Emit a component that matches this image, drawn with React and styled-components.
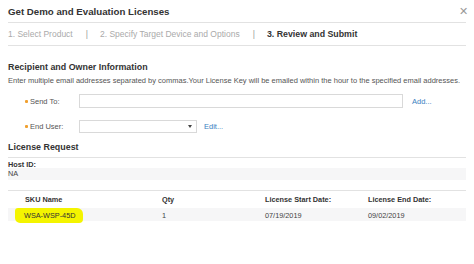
import React from "react";
import styled, { createGlobalStyle } from "styled-components";

const GlobalStyle = createGlobalStyle`
  body {
    margin: 0;
    background: #fff;
    font-family: "Liberation Sans", Arial, sans-serif;
    color: #333;
  }
`;

const Dialog = styled.div`
  width: 474px;
  height: 264px;
  padding: 0 8px;
  box-sizing: border-box;
  overflow: hidden;
`;

const Header = styled.div`
  height: 22px;
  display: flex;
  align-items: center;
  justify-content: space-between;
  border-bottom: 1px solid #e2e2e2;
`;

const Title = styled.h1`
  margin: 0;
  font-size: 9.7px;
  font-weight: bold;
  color: #333;
`;

const Close = styled.span`
  font-size: 11px;
  color: #999;
  line-height: 1;
  margin-right: -2px;
`;

const Steps = styled.div`
  height: 22px;
  display: flex;
  align-items: center;
  border-bottom: 1px solid #e2e2e2;
  font-size: 8.5px;
  color: #aaa;
`;

const Step = styled.span`
  color: ${(p) => (p.$active ? "#333" : "#aaa")};
  font-weight: ${(p) => (p.$active ? "bold" : "normal")};
  font-size: ${(p) => (p.$active ? "8.8px" : "inherit")};
`;

const Sep = styled.span`
  margin: 0 12px 0 13px;
  color: #999;
`;

const SectionTitle = styled.h2`
  margin: ${(p) => p.$top}px 0 0;
  font-size: 8.9px;
  font-weight: bold;
  color: #333;
  line-height: 12px;
`;

const Note = styled.p`
  margin: 3px 0 0;
  font-size: 7.5px;
  color: #555;
  line-height: 10px;
  white-space: nowrap;
`;

const FormRow = styled.div`
  display: flex;
  align-items: center;
  margin-top: ${(p) => p.$top}px;
  height: 14px;
`;

const Label = styled.label`
  width: 71px;
  padding-left: 17px;
  box-sizing: border-box;
  font-size: 7.5px;
  color: #555;
  display: flex;
  align-items: center;
  gap: 2px;
`;

const Bullet = styled.span`
  width: 3px;
  height: 3px;
  background: #f0a030;
  border-radius: 1px;
`;

const TextInput = styled.div`
  width: 324px;
  height: 14px;
  box-sizing: border-box;
  border: 1px solid #d9d9d9;
  background: #fff;
`;

const Select = styled.div`
  width: 118px;
  height: 13px;
  box-sizing: border-box;
  border: 1px solid #d9d9d9;
  display: flex;
  align-items: center;
  justify-content: flex-end;
  padding-right: 4px;
`;

const Caret = styled.span`
  width: 0;
  height: 0;
  border-left: 2px solid transparent;
  border-right: 2px solid transparent;
  border-top: 3px solid #444;
`;

const Link = styled.a`
  margin-left: ${(p) => p.$gap}px;
  font-size: 7.5px;
  color: #3a7fc1;
  text-decoration: none;
`;

const Rule = styled.div`
  border-top: 1px solid #e2e2e2;
  margin-top: ${(p) => p.$top}px;
`;

const HostBlock = styled.div`
  font-size: 7.3px;
  line-height: 9px;
`;

const HostLabel = styled.div`
  font-weight: bold;
  color: #333;
  padding-top: 2px;
`;

const HostValue = styled.div`
  margin-top: -1px;
  background: #f6f6f7;
  color: #444;
  height: 12px;
  line-height: 12px;
`;

const TableRow = styled.div`
  display: grid;
  grid-template-columns: 137px 103px 103px 1fr;
  padding-left: 17px;
  height: ${(p) => p.$h}px;
  align-items: center;
  font-size: 7.3px;
  color: ${(p) => (p.$head ? "#333" : "#444")};
  font-weight: ${(p) => (p.$head ? "bold" : "normal")};
  background: ${(p) => (p.$shade ? "#f6f6f7" : "transparent")};
`;

const Highlight = styled.span`
  justify-self: start;
  margin-left: -10px;
  padding: 3px 7px 3px 9px;
  background: #f4f400;
  border-radius: 3px 6px 4px 5px;
  color: #333;
`;

export default function App() {
  return (
    <>
      <GlobalStyle />
      <Dialog>
        <Header>
          <Title>Get Demo and Evaluation Licenses</Title>
          <Close>✕</Close>
        </Header>
        <Steps>
          <Step>1. Select Product</Step>
          <Sep>|</Sep>
          <Step>2. Specify Target Device and Options</Step>
          <Sep>|</Sep>
          <Step $active>3. Review and Submit</Step>
        </Steps>

        <SectionTitle $top={15}>Recipient and Owner Information</SectionTitle>
        <Note>
          Enter multiple email addresses separated by commas.Your License Key will be emailed within the hour to the specified email addresses.
        </Note>

        <FormRow $top={8}>
          <Label>
            <Bullet />
            Send To:
          </Label>
          <TextInput />
          <Link $gap={9}>Add...</Link>
        </FormRow>

        <FormRow $top={11}>
          <Label>
            <Bullet />
            End User:
          </Label>
          <Select>
            <Caret />
          </Select>
          <Link $gap={7}>Edit...</Link>
        </FormRow>

        <SectionTitle $top={8}>License Request</SectionTitle>
        <Rule $top={4} />
        <HostBlock>
          <HostLabel>Host ID:</HostLabel>
          <HostValue>NA</HostValue>
        </HostBlock>
        <Rule $top={10} />
        <TableRow $head $h={17}>
          <span>SKU Name</span>
          <span>Qty</span>
          <span>License Start Date:</span>
          <span>License End Date:</span>
        </TableRow>
        <TableRow $shade $h={13}>
          <Highlight>WSA-WSP-45D</Highlight>
          <span>1</span>
          <span>07/19/2019</span>
          <span>09/02/2019</span>
        </TableRow>
      </Dialog>
    </>
  );
}
